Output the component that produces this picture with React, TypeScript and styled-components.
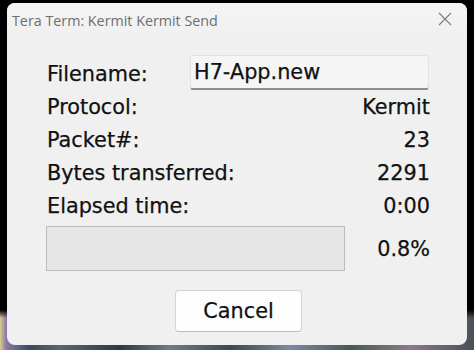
import React from "react";
import styled, { createGlobalStyle } from "styled-components";

const Global = createGlobalStyle`
  html, body { margin: 0; padding: 0; background: #000; }
  * { box-sizing: border-box; }
`;

const Desktop = styled.div`
  width: 474px;
  height: 350px;
  overflow: hidden;
  padding: 3px 7px 5px 7px;
  background:
    linear-gradient(to bottom, #000 0, #000 310px, rgba(0,0,0,0) 318px),
    linear-gradient(90deg, #d8cf8a 0, #8a7aa8 6px, #3a4b5a 30px, #556a6a 60px, #2d3a44 120px, #6a7f86 170px, #3c4a4e 230px, #7b8aa0 290px, #4b5a52 350px, #8a7a8a 410px, #4a4f58 474px);
`;

const Window = styled.div`
  width: 460px;
  height: 342px;
  border-radius: 8px;
  background: #f0f0f0;
  display: flex;
  flex-direction: column;
  overflow: hidden;
`;

const TitleBar = styled.div`
  height: 36px;
  display: flex;
  align-items: center;
  justify-content: space-between;
  padding: 0 10px 0 5px;
  background: linear-gradient(to bottom, #f4f4f4, #f0f0f0);
`;

const Title = styled.span`
  font-family: "Open Sans", "Noto Sans", sans-serif;
  font-size: 14.3px;
  color: #6e6e6e;
  margin-top: 0px;
`;

const CloseButton = styled.div`
  width: 24px;
  height: 24px;
  display: flex;
  align-items: center;
  justify-content: center;
  margin-top: -3px;
`;

const Body = styled.div`
  flex: 1;
  display: flex;
  flex-direction: column;
  padding: 20px 37px 13px 39px;
  font-family: "DejaVu Sans", Verdana, sans-serif;
  font-size: 20.8px;
  color: #111;
  -webkit-text-stroke: 0.25px #111;
`;

const Row = styled.div`
  height: 33px;
  display: flex;
  align-items: center;
  justify-content: space-between;
  line-height: 33px;
  white-space: nowrap;
`;

const Label = styled.span`
  padding-left: 1px;
`;

const Value = styled.span``;

const FileBox = styled.div`
  width: 239px;
  height: 35px;
  margin-top: -4px;
  margin-right: 1px;
  background: #f5f5f5;
  border: 1px solid #e2e2e2;
  border-bottom: 2px solid #8e8e8e;
  border-radius: 3px;
  padding-left: 3px;
  display: flex;
  align-items: center;
  line-height: 1;
`;

const ProgressRow = styled.div`
  margin-top: 3px;
  height: 45px;
  display: flex;
  align-items: center;
  justify-content: space-between;
`;

const Progress = styled.div`
  width: 299px;
  height: 45px;
  background: #e6e6e6;
  border: 1px solid #bcbcbc;
  overflow: hidden;
`;

const Fill = styled.div`
  height: 100%;
  background: #06b025;
`;

const ButtonRow = styled.div`
  margin-top: 19px;
  display: flex;
  justify-content: center;
  padding-left: 1px;
`;

const Button = styled.button`
  width: 127px;
  height: 42px;
  background: #fdfdfd;
  border: 1px solid #d4d4d4;
  border-bottom-color: #bdbdbd;
  border-radius: 4px;
  font-family: "DejaVu Sans", Verdana, sans-serif;
  font-size: 20.8px;
  color: #111;
  -webkit-text-stroke: 0.25px #111;
  padding: 0;
`;

export default function App() {
  const filled = 0;
  return (
    <>
      <Global />
      <Desktop>
        <Window>
          <TitleBar>
            <Title>Tera Term: Kermit Kermit Send</Title>
            <CloseButton>
              <svg width="14" height="14" viewBox="0 0 14 14">
                <path d="M1 1 L13 13 M13 1 L1 13" stroke="#7a7a7a" strokeWidth="1.1" fill="none" />
              </svg>
            </CloseButton>
          </TitleBar>
          <Body>
            <Row>
              <Label>Filename:</Label>
              <FileBox>H7-App.new</FileBox>
            </Row>
            <Row>
              <Label>Protocol:</Label>
              <Value>Kermit</Value>
            </Row>
            <Row>
              <Label>Packet#:</Label>
              <Value>23</Value>
            </Row>
            <Row>
              <Label>Bytes transferred:</Label>
              <Value>2291</Value>
            </Row>
            <Row>
              <Label>Elapsed time:</Label>
              <Value>0:00</Value>
            </Row>
            <ProgressRow>
              <Progress>
                <Fill style={{ width: `${filled}%` }} />
              </Progress>
              <Value>0.8%</Value>
            </ProgressRow>
            <ButtonRow>
              <Button>Cancel</Button>
            </ButtonRow>
          </Body>
        </Window>
      </Desktop>
    </>
  );
}
